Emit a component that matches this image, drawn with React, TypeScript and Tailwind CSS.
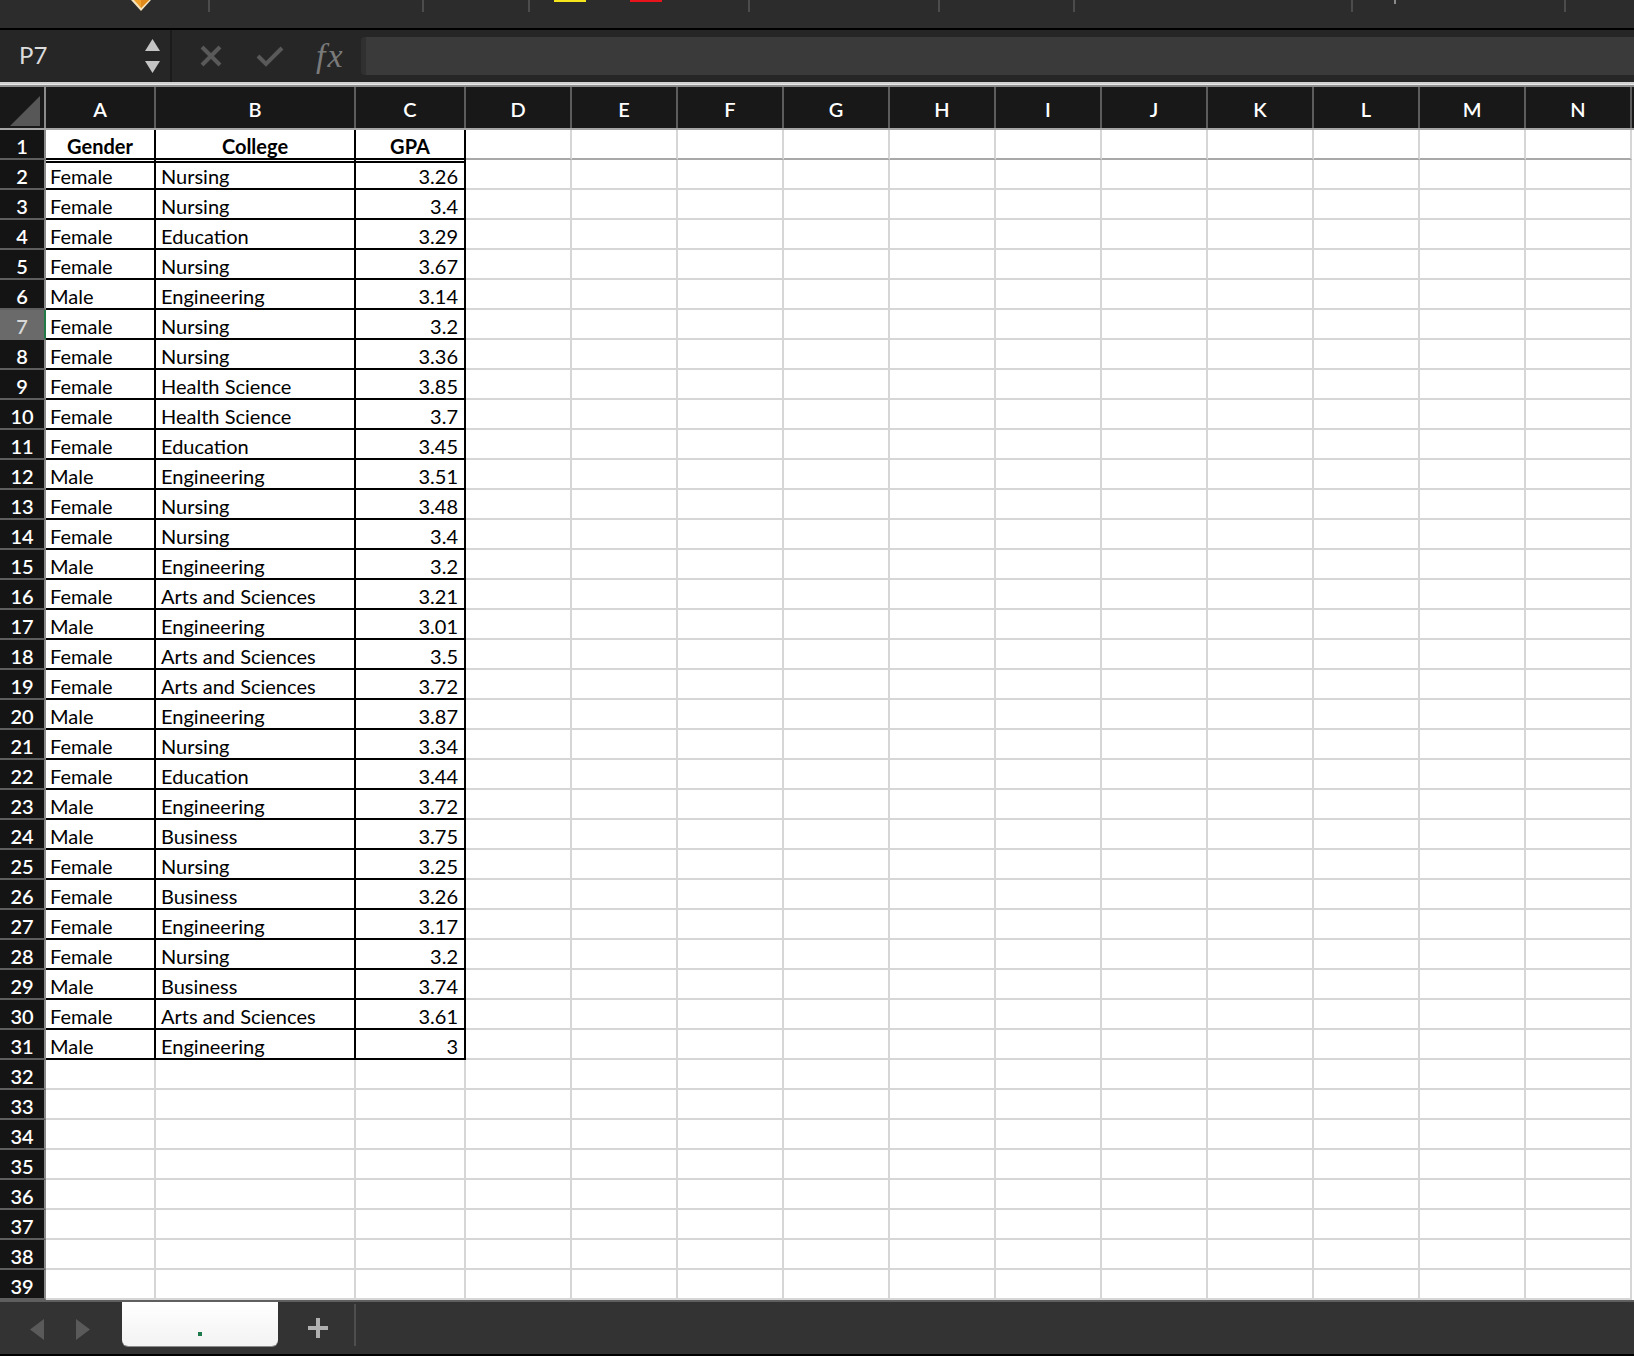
import React from "react";
import clsx from "clsx";

type Row = [string, string, string];

const DATA: Row[] = [
  ["Female", "Nursing", "3.26"],
  ["Female", "Nursing", "3.4"],
  ["Female", "Education", "3.29"],
  ["Female", "Nursing", "3.67"],
  ["Male", "Engineering", "3.14"],
  ["Female", "Nursing", "3.2"],
  ["Female", "Nursing", "3.36"],
  ["Female", "Health Science", "3.85"],
  ["Female", "Health Science", "3.7"],
  ["Female", "Education", "3.45"],
  ["Male", "Engineering", "3.51"],
  ["Female", "Nursing", "3.48"],
  ["Female", "Nursing", "3.4"],
  ["Male", "Engineering", "3.2"],
  ["Female", "Arts and Sciences", "3.21"],
  ["Male", "Engineering", "3.01"],
  ["Female", "Arts and Sciences", "3.5"],
  ["Female", "Arts and Sciences", "3.72"],
  ["Male", "Engineering", "3.87"],
  ["Female", "Nursing", "3.34"],
  ["Female", "Education", "3.44"],
  ["Male", "Engineering", "3.72"],
  ["Male", "Business", "3.75"],
  ["Female", "Nursing", "3.25"],
  ["Female", "Business", "3.26"],
  ["Female", "Engineering", "3.17"],
  ["Female", "Nursing", "3.2"],
  ["Male", "Business", "3.74"],
  ["Female", "Arts and Sciences", "3.61"],
  ["Male", "Engineering", "3"],
];

const HEADERS: Row = ["Gender", "College", "GPA"];

const COLUMNS = [
  { key: "A", width: "w-[110px]", pad: "pl-[4px] justify-start" },
  { key: "B", width: "w-[200px]", pad: "pl-[5px] justify-start" },
  { key: "C", width: "w-[110px]", pad: "pr-[6px] justify-end" },
  ...["D", "E", "F", "G", "H", "I", "J", "K", "L", "M", "N"].map((key) => ({
    key,
    width: "w-[106px]",
    pad: "",
  })),
];

const TOTAL_ROWS = 39;
const SELECTED_ROW = 7;

const font = "font-['Lato','Liberation_Sans',sans-serif]";

function TopStrip() {
  return (
    <div className="flex h-[28px] items-start bg-[#2c2c2c]">
      <svg className="ml-[130px] h-[12px] w-[22px]" viewBox="0 0 22 12">
        <polygon points="1,0 21,0 11,11" fill="#f4e3bd" />
        <polygon points="4,0 19,0 11,8" fill="#f0a22e" />
        <polygon points="11,0 19,0 11,8" fill="#e08a1c" />
      </svg>
      <div className="ml-[56px] h-[12px] w-[2px] bg-[#4c4c4c]" />
      <div className="ml-[212px] h-[12px] w-[2px] bg-[#4c4c4c]" />
      <div className="ml-[104px] h-[12px] w-[2px] bg-[#4c4c4c]" />
      <div className="ml-[24px] h-[2px] w-[32px] bg-[#f5e51b]" />
      <div className="ml-[44px] h-[2px] w-[32px] bg-[#e8141c]" />
      <div className="ml-[86px] h-[12px] w-[2px] bg-[#4c4c4c]" />
      <div className="ml-[188px] h-[12px] w-[2px] bg-[#4c4c4c]" />
      <div className="ml-[133px] h-[12px] w-[2px] bg-[#4c4c4c]" />
      <div className="ml-[276px] h-[12px] w-[2px] bg-[#4c4c4c]" />
      <div className="ml-[41px] h-[4px] w-[2px] bg-[#8a8a8a]" />
      <div className="ml-[168px] h-[12px] w-[2px] bg-[#4c4c4c]" />
    </div>
  );
}

function FormulaBar() {
  return (
    <div className="flex h-[52px] items-center bg-[#262626]">
      {/* Name box */}
      <div className="flex h-full w-[170px] items-center justify-between pl-[19px] pr-[10px]">
        <span className={clsx(font, "pb-[2px] text-[24px] text-[#dcdcdc]")}>P7</span>
        <div className="flex flex-col gap-[10px]">
          <svg className="h-[12px] w-[15px]" viewBox="0 0 15 12">
            <polygon points="7.5,0 15,12 0,12" fill="#c4c4c4" />
          </svg>
          <svg className="h-[12px] w-[15px]" viewBox="0 0 15 12">
            <polygon points="0,0 15,0 7.5,12" fill="#c4c4c4" />
          </svg>
        </div>
      </div>
      <div className="h-full w-[2px] bg-[#1b1b1b]" />

      {/* Cancel / enter / function */}
      <svg className="ml-[28px] h-[22px] w-[22px]" viewBox="0 0 22 22">
        <path d="M2 2 L20 20 M20 2 L2 20" stroke="#595959" strokeWidth="4" />
      </svg>
      <svg className="ml-[34px] h-[22px] w-[28px]" viewBox="0 0 28 22">
        <path d="M2 11 L10 19 L26 3" stroke="#595959" strokeWidth="4" fill="none" />
      </svg>
      <span className="ml-[32px] w-[29px] whitespace-nowrap font-['Liberation_Serif',serif] text-[34px] italic leading-none tracking-[2px] text-[#7a7a7a]">
        fx
      </span>

      {/* Formula input */}
      <div className="ml-[16px] h-[38px] flex-1 rounded-l-[4px] border-l-[5px] border-[#303030] bg-[#3a3a3a]" />
    </div>
  );
}

function ColumnHeader() {
  return (
    <>
      <div className="h-[5px] border-t-2 border-b-2 border-t-[#d2d2d2] border-b-[#8e8e8e] bg-[#e8e8e8]" />
      <div className="flex h-[43px] border-b-2 border-[#a6a6a6] bg-[#181818]">
        <div className="flex w-[46px] shrink-0 items-end border-r-2 border-[#8a8a8a] pb-[2px] pl-[10px]">
          <svg className="h-[30px] w-[30px]" viewBox="0 0 30 30">
            <polygon points="30,0 30,30 0,30" fill="#575757" />
          </svg>
        </div>
        {COLUMNS.map((c) => (
          <div
            key={c.key}
            className={clsx(
              font,
              c.width,
              "flex shrink-0 items-center justify-center border-r-2 border-[#5c5c5c] pt-[2px] text-[20px] font-semibold text-white",
            )}
          >
            {c.key}
          </div>
        ))}
      </div>
    </>
  );
}

function RowHeader({ n }: { n: number }) {
  const selected = n === SELECTED_ROW;
  return (
    <div
      className={clsx(
        font,
        "flex h-[30px] w-[46px] shrink-0 items-center justify-center border-r-2 border-b-2 pt-[4px] text-[20px] font-semibold",
        selected
          ? "border-r-[#1f7a45] border-b-[#6a6a6a] bg-[#6a6a6a] text-[#d8d8d8]"
          : "border-r-[#8a8a8a] border-b-[#5e5e5e] bg-[#141414] text-white",
      )}
    >
      {n}
    </div>
  );
}

function SheetRow({ n }: { n: number }) {
  const values: Row | null = n === 1 ? HEADERS : DATA[n - 2] ?? null;
  return (
    <div className="flex">
      <RowHeader n={n} />
      {COLUMNS.map((c, i) => {
        const inTable = values !== null && i < 3;
        return (
          <div
            key={c.key}
            className={clsx(
              font,
              c.width,
              "flex h-[30px] shrink-0 items-center overflow-hidden whitespace-nowrap border-r-2 border-b-2 pt-[4px] text-[20px] text-black",
              inTable ? "border-black" : "border-[#d6d6d6]",
              n === 1 && !inTable && "border-b-[#a8a8a8]",
              n === 2 && inTable && "shadow-[inset_0_1px_0_#fff,inset_0_3px_0_#000]",
              n === 1 ? "justify-center font-bold" : c.pad,
            )}
          >
            {inTable ? values![i] : null}
          </div>
        );
      })}
    </div>
  );
}

function SheetTabs() {
  return (
    <div className="flex h-[56px] items-start border-t-2 border-b-2 border-t-[#5f5f5f] border-b-black bg-[#333333]">
      <svg className="ml-[30px] mt-[17px] h-[21px] w-[14px]" viewBox="0 0 14 21">
        <polygon points="14,0 14,21 0,10.5" fill="#5a5a5a" />
      </svg>
      <svg className="ml-[32px] mt-[17px] h-[21px] w-[14px]" viewBox="0 0 14 21">
        <polygon points="0,0 14,10.5 0,21" fill="#5a5a5a" />
      </svg>
      <div className="ml-[32px] flex h-[44px] w-[156px] justify-center rounded-b-[6px] bg-gradient-to-b from-white to-[#f3f3f3] pt-[30px] shadow-[0_1px_0_#8a8a8a]">
        <div className="h-[4px] w-[4px] bg-[#1e7a4a]" />
      </div>
      <svg className="ml-[30px] mt-[16px] h-[20px] w-[20px]" viewBox="0 0 20 20">
        <path d="M10 0 V20 M0 10 H20" stroke="#b0b0b0" strokeWidth="4" />
      </svg>
      <div className="ml-[26px] mt-[2px] h-[42px] w-[2px] bg-[#4e4e4e]" />
    </div>
  );
}

export default function App(): React.JSX.Element {
  return (
    <div className="h-[1356px] w-[1634px] overflow-hidden bg-white">
      <TopStrip />
      <div className="h-[2px] bg-black" />
      <FormulaBar />
      <ColumnHeader />
      <div>
        {Array.from({ length: TOTAL_ROWS }, (_, i) => (
          <SheetRow key={i + 1} n={i + 1} />
        ))}
      </div>
      <SheetTabs />
    </div>
  );
}
